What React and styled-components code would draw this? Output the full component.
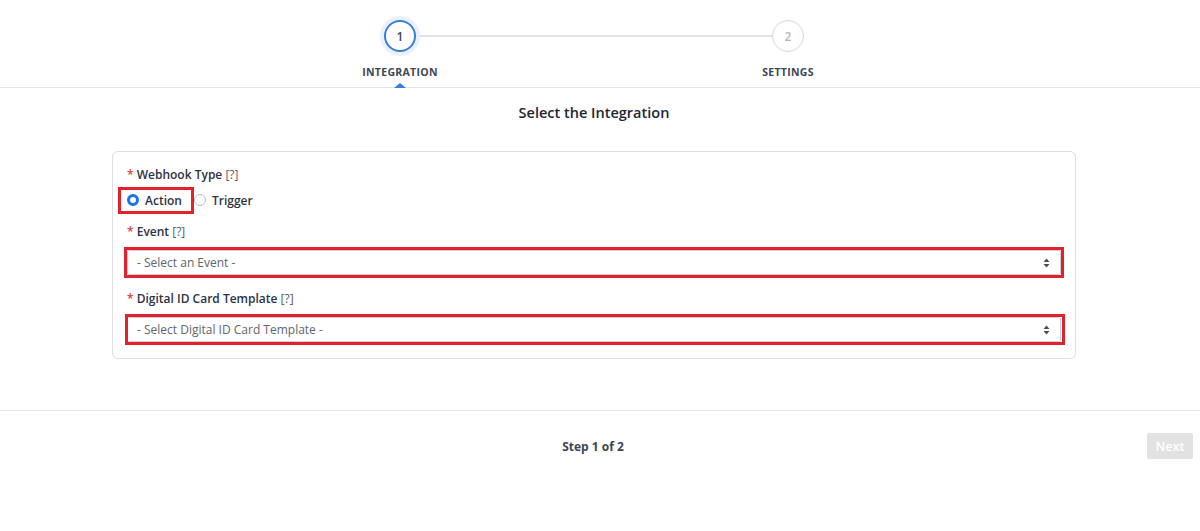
import styled, { createGlobalStyle } from "styled-components";

const GlobalStyle = createGlobalStyle`
    * { box-sizing: border-box; }
    body {
        margin: 0;
        background: #ffffff;
        font-family: "Open Sans", "Noto Sans", Arial, sans-serif;
        color: #2c3444;
    }
`;

const steps = [
    { num: 1, label: "INTEGRATION", active: true },
    { num: 2, label: "SETTINGS", active: false },
];

function UpDownArrows() {
    return (
        <svg width="7" height="10" viewBox="0 0 7 10">
            <path d="M3.5 0.5 L6.5 4 H0.5 Z" fill="#4a4f57" />
            <path d="M3.5 9.5 L6.5 6 H0.5 Z" fill="#4a4f57" />
        </svg>
    );
}

export default function App() {
    return (
        <Page>
            <GlobalStyle />
            <Header>
                <Stepper>
                    <StepCircle $active>1</StepCircle>
                    <Connector />
                    <StepCircle>2</StepCircle>
                    {steps.map(s => (
                        <StepLabel key={s.num} $active={s.active}>{s.label}</StepLabel>
                    ))}
                </Stepper>
            </Header>

            <Title>Select the Integration</Title>

            <Card>
                <Label>
                    <Req>*</Req> Webhook Type <Help>[?]</Help>
                </Label>
                <RadioRow>
                    <RadioOption $marked>
                        <RadioDot $checked />
                        Action
                    </RadioOption>
                    <RadioOption>
                        <RadioDot />
                        Trigger
                    </RadioOption>
                </RadioRow>

                <Label $top={13}>
                    <Req>*</Req> Event <Help>[?]</Help>
                </Label>
                <SelectBox $marked>
                    <span>- Select an Event -</span>
                    <UpDownArrows />
                </SelectBox>

                <Label $top={15}>
                    <Req>*</Req> Digital ID Card Template <Help>[?]</Help>
                </Label>
                <SelectBox $marked $shift>
                    <span>- Select Digital ID Card Template -</span>
                    <UpDownArrows />
                </SelectBox>
            </Card>

            <Footer>
                <span />
                <StepCount>Step 1 of 2</StepCount>
                <NextButton disabled>Next</NextButton>
            </Footer>
        </Page>
    );
}

const Page = styled.div`
    display: flex;
    flex-direction: column;
    min-height: 531px;
`;

const Header = styled.header`
    display: flex;
    justify-content: center;
    padding: 20px 12px 7px 0;
    border-bottom: 1px solid #e1e6f0;
`;

const Stepper = styled.div`
    display: grid;
    grid-template-columns: 100px 288px 100px;
    grid-template-rows: 32px auto;
    row-gap: 12px;
    justify-items: center;
    align-items: center;
`;

const StepCircle = styled.div`
    width: 32px;
    height: 32px;
    border-radius: 50%;
    display: flex;
    align-items: center;
    justify-content: center;
    font-size: 12px;
    font-weight: 600;
    background: #fff;
    color: ${p => (p.$active ? "#3a4456" : "#b5b9c0")};
    border: ${p => (p.$active ? "2px solid #3b7ddd" : "1.5px solid #d6d8dc")};
    box-shadow: ${p => (p.$active ? "0 0 0 4px #eaf1fc" : "none")};
    position: relative;
    z-index: 1;
`;

const Connector = styled.div`
    justify-self: stretch;
    height: 2px;
    background: #e0e3e8;
    margin: 0 -34px;
`;

const StepLabel = styled.div`
    position: relative;
    font-size: 10.5px;
    font-weight: 700;
    letter-spacing: 0.3px;
    line-height: 16px;
    color: #3d4658;
    ${p => (p.$active ? "" : "grid-column: 3;")}
    &::after {
        content: "";
        display: ${p => (p.$active ? "block" : "none")};
        position: absolute;
        left: 50%;
        bottom: -8px;
        transform: translateX(-50%);
        border-left: 6px solid transparent;
        border-right: 6px solid transparent;
        border-bottom: 5px solid #3b7ddd;
    }
`;

const Title = styled.h2`
    margin: 15px 12px 0 0;
    text-align: center;
    font-size: 14.5px;
    font-weight: 600;
    line-height: 20px;
    color: #1e2535;
`;

const Card = styled.section`
    margin: 28px 124px 0 112px;
    border: 1px solid #dedfe2;
    border-radius: 6px;
    padding: 14px 14px 16px;
    display: flex;
    flex-direction: column;
`;

const Label = styled.div`
    margin-top: ${p => p.$top || 0}px;
    font-size: 12px;
    font-weight: 600;
    line-height: 18px;
    color: #2c3444;
`;

const Req = styled.span`
    color: #e23b3b;
`;

const Help = styled.span`
    font-weight: 400;
    color: #555c66;
`;

const RadioRow = styled.div`
    display: flex;
    align-items: center;
    gap: 12px;
    margin-top: 6px;
    height: 20px;
`;

const RadioOption = styled.label`
    position: relative;
    display: flex;
    align-items: center;
    gap: 6px;
    font-size: 12px;
    font-weight: 600;
    color: #2c3444;
    &::after {
        content: "";
        display: ${p => (p.$marked ? "block" : "none")};
        position: absolute;
        left: -9px;
        right: -12px;
        top: -5px;
        bottom: -5px;
        border: 3px solid #e3202c;
    }
`;

const RadioDot = styled.span`
    width: 12px;
    height: 12px;
    border-radius: 50%;
    background: #fff;
    border: ${p => (p.$checked ? "3.5px solid #1a73e8" : "1px solid #b9bdc3")};
`;

const SelectBox = styled.div`
    position: relative;
    margin-top: 9px;
    height: 25px;
    border: 1px solid #cdd1d8;
    border-radius: 2px;
    padding: 0 10px 0 9px;
    display: flex;
    align-items: center;
    justify-content: space-between;
    font-size: 12px;
    color: #5f656d;
    &::after {
        content: "";
        display: ${p => (p.$marked ? "block" : "none")};
        position: absolute;
        left: ${p => (p.$shift ? "-3px" : "-4px")};
        right: ${p => (p.$shift ? "-5px" : "-4px")};
        top: -4px;
        bottom: -4px;
        border: 3px solid #e3202c;
    }
`;

const Footer = styled.footer`
    margin-top: 51px;
    border-top: 1px solid #e4e5e7;
    padding: 22px 7px 0 0;
    display: grid;
    grid-template-columns: 1fr auto 1fr;
    align-items: center;
`;

const StepCount = styled.div`
    font-size: 12px;
    font-weight: 700;
    color: #3d4556;
    margin-right: 7px;
`;

const NextButton = styled.button`
    justify-self: end;
    width: 46px;
    height: 26px;
    border: none;
    border-radius: 2px;
    background: #e2e2e2;
    color: #ffffff;
    font-family: inherit;
    font-size: 12.5px;
    font-weight: 600;
    padding: 0;
`;
